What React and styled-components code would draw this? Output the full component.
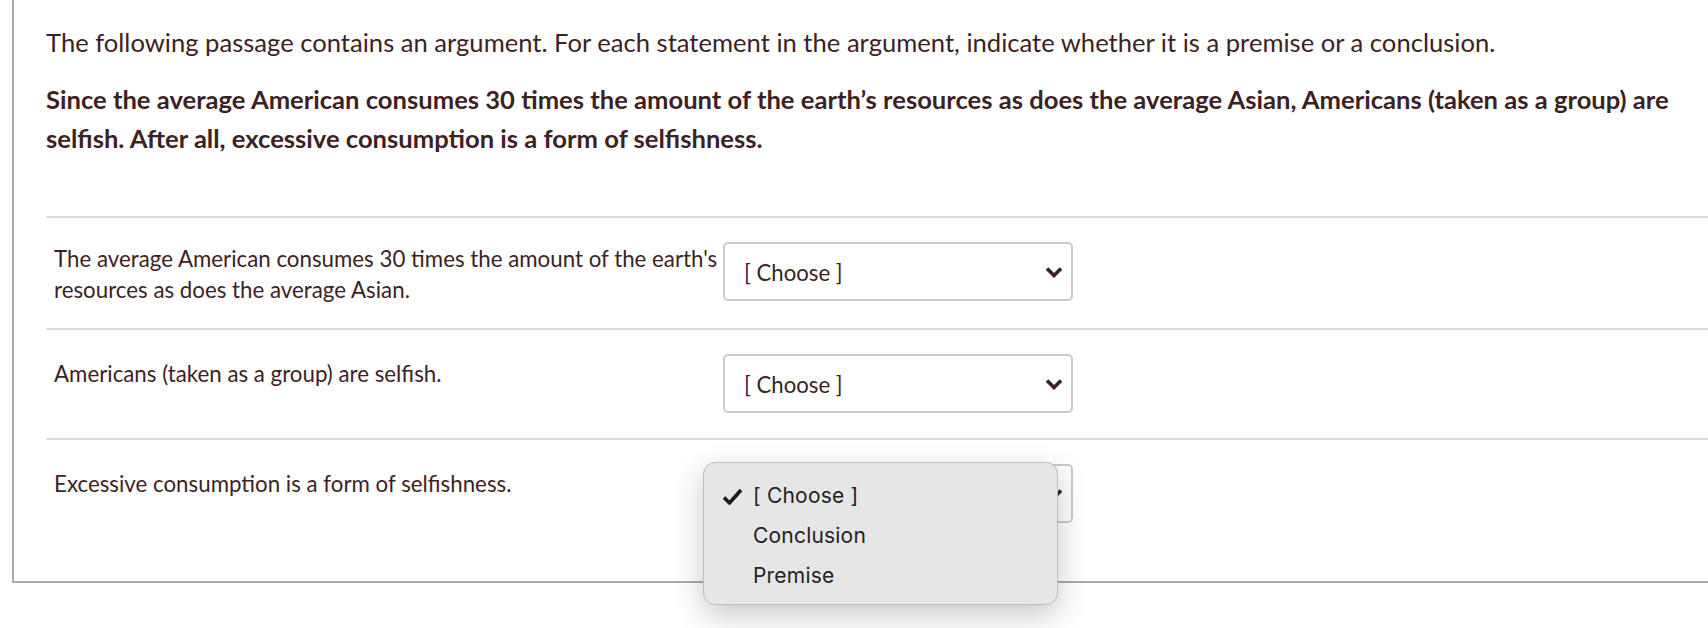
import React, { useState } from 'react';
import styled, { createGlobalStyle } from 'styled-components';

const GlobalStyle = createGlobalStyle`
  html, body {
    margin: 0;
    padding: 0;
    background: #fff;
    overflow: hidden;
  }
  body {
    font-family: Lato, "Open Sans", sans-serif;
    color: #3d1f24;
  }
`;

const Page = styled.main`
  padding-left: 12px;
  min-height: 100vh;
`;

const Question = styled.section`
  border-left: 2px solid #aaa;
  border-bottom: 2px solid #aaa;
  padding: 26px 0 33px 32px;
`;

const Prompt = styled.p`
  margin: 0;
  font-size: 25.6px;
  line-height: 32px;
`;

const Passage = styled.p`
  margin: 22px 0 0;
  font-size: 25.6px;
  font-weight: 700;
  line-height: 39px;
  padding-right: 20px;
`;

const Rows = styled.div`
  margin-top: 58px;
`;

const Row = styled.div`
  display: grid;
  grid-template-columns: 669px 350px 1fr;
  align-items: start;
  border-top: 2px solid #ddd;
  padding: 24px 0 25px 8px;
`;

const Statement = styled.div`
  font-size: 22.3px;
  line-height: 30.5px;
  padding-top: ${(p) => (p.$multi ? '2px' : '5px')};
  margin-bottom: -2px;
`;

const SelectWrap = styled.div`
  position: relative;
`;

const Select = styled.div`
  box-sizing: border-box;
  height: 59px;
  display: flex;
  align-items: center;
  justify-content: space-between;
  padding: 2px 8px 0 19px;
  border: 2px solid #cbcbcb;
  border-radius: 5px;
  background: #fff;
  font-size: 22.2px;
  cursor: pointer;

  svg {
    display: block;
    margin-top: -2px;
  }
`;

const Menu = styled.ul`
  position: absolute;
  left: -20px;
  top: -2px;
  width: 355px;
  box-sizing: border-box;
  margin: 0;
  padding: 13px 0 8px;
  list-style: none;
  background: #e6e6e6;
  border: 1px solid #bdbdbd;
  border-radius: 12px;
  box-shadow: 0 10px 30px rgba(0, 0, 0, 0.22);
  font-family: Inter, "Liberation Sans", sans-serif;
  font-size: 21px;
  letter-spacing: 0.2px;
  color: #222;
  z-index: 10;
`;

const Option = styled.li`
  position: relative;
  height: 40px;
  line-height: 40px;
  padding-left: 49px;

  svg {
    position: absolute;
    left: 18px;
    top: 12px;
  }
`;

const Chevron = () => (
  <svg width="18" height="12" viewBox="0 0 18 12">
    <polyline
      points="2,2.5 9,9.5 16,2.5"
      fill="none"
      stroke="#3d1f24"
      strokeWidth="3.6"
      strokeLinejoin="miter"
    />
  </svg>
);

const Check = () => (
  <svg width="21" height="18" viewBox="0 0 21 18">
    <polyline
      points="2,9.5 7.5,15 19,2"
      fill="none"
      stroke="#1a1a1a"
      strokeWidth="3.6"
      strokeLinejoin="round"
    />
  </svg>
);

const statements = [
  {
    text: "The average American consumes 30 times the amount of the earth's resources as does the average Asian.",
    multi: true,
  },
  { text: 'Americans (taken as a group) are selfish.' },
  { text: 'Excessive consumption is a form of selfishness.', open: true },
];

const options = ['[ Choose ]', 'Conclusion', 'Premise'];

const App = () => {
  const [selected] = useState('[ Choose ]');

  return (
    <>
      <GlobalStyle />
      <Page>
        <Question>
          <Prompt>
            The following passage contains an argument. For each statement in the argument, indicate
            whether it is a premise or a conclusion.
          </Prompt>
          <Passage>
            Since the average American consumes 30 times the amount of the earth’s resources as does
            the average Asian, Americans (taken as a group) are selfish. After all, excessive
            consumption is a form of selfishness.
          </Passage>

          <Rows>
            {statements.map((s) => (
              <Row key={s.text}>
                <Statement $multi={s.multi}>{s.text}</Statement>
                <SelectWrap>
                  <Select>
                    <span>{selected}</span>
                    <Chevron />
                  </Select>
                  {s.open && (
                    <Menu>
                      {options.map((o) => (
                        <Option key={o}>
                          {o === selected && <Check />}
                          {o}
                        </Option>
                      ))}
                    </Menu>
                  )}
                </SelectWrap>
              </Row>
            ))}
          </Rows>
        </Question>
      </Page>
    </>
  );
};

export default App;
